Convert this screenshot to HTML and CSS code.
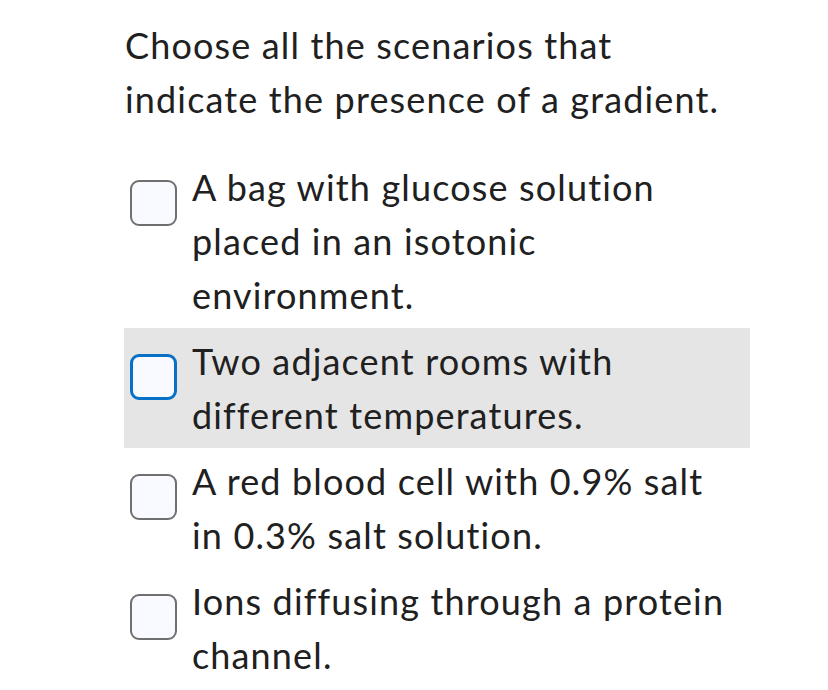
FILE: index.html
```html
<!DOCTYPE html>
<html>
<head>
<meta charset="utf-8">
<link rel="stylesheet" href="styles.css">
</head>
<body>
<div class="question">
  <p class="prompt">Choose all the scenarios that indicate the presence of a gradient.</p>
  <ul class="options">
    <li class="option"><span class="box"></span><span class="label">A bag with glucose solution placed in an isotonic environment.</span></li>
    <li class="option hover"><span class="box focus"></span><span class="label">Two adjacent rooms with different temperatures.</span></li>
    <li class="option"><span class="box"></span><span class="label">A red blood cell with 0.9% salt in 0.3% salt solution.</span></li>
    <li class="option"><span class="box"></span><span class="label">Ions diffusing through a protein channel.</span></li>
  </ul>
</div>
</body>
</html>
```
FILE: styles.css
```css
html, body {
  margin: 0;
  padding: 0;
  background: #ffffff;
}
body {
  font-family: Lato, "Noto Sans", sans-serif;
  font-size: 36px;
  line-height: 54px;
  letter-spacing: 1.15px;
  font-variant-ligatures: none;
  color: #202020;
}
.question {
  width: 626px;
  margin-left: 124px;
  padding-top: 18px;
}
.prompt {
  margin: 0 0 28px 1px;
  padding-right: 6px;
}
.options {
  list-style: none;
  margin: 0;
  padding: 0;
}
.option {
  display: flex;
  align-items: flex-start;
  gap: 15px;
  padding: 6px 18px 6px 6px;
}
.option.hover {
  background: #e5e5e5;
}
.box {
  flex: none;
  box-sizing: border-box;
  width: 47px;
  height: 46px;
  margin-top: 20px;
  border: 2px solid #6f6f6f;
  border-radius: 9px;
  background: #f9faff;
}
.box.focus {
  border: 3px solid #0770c7;
}
.label {
  flex: 1;
}
```
